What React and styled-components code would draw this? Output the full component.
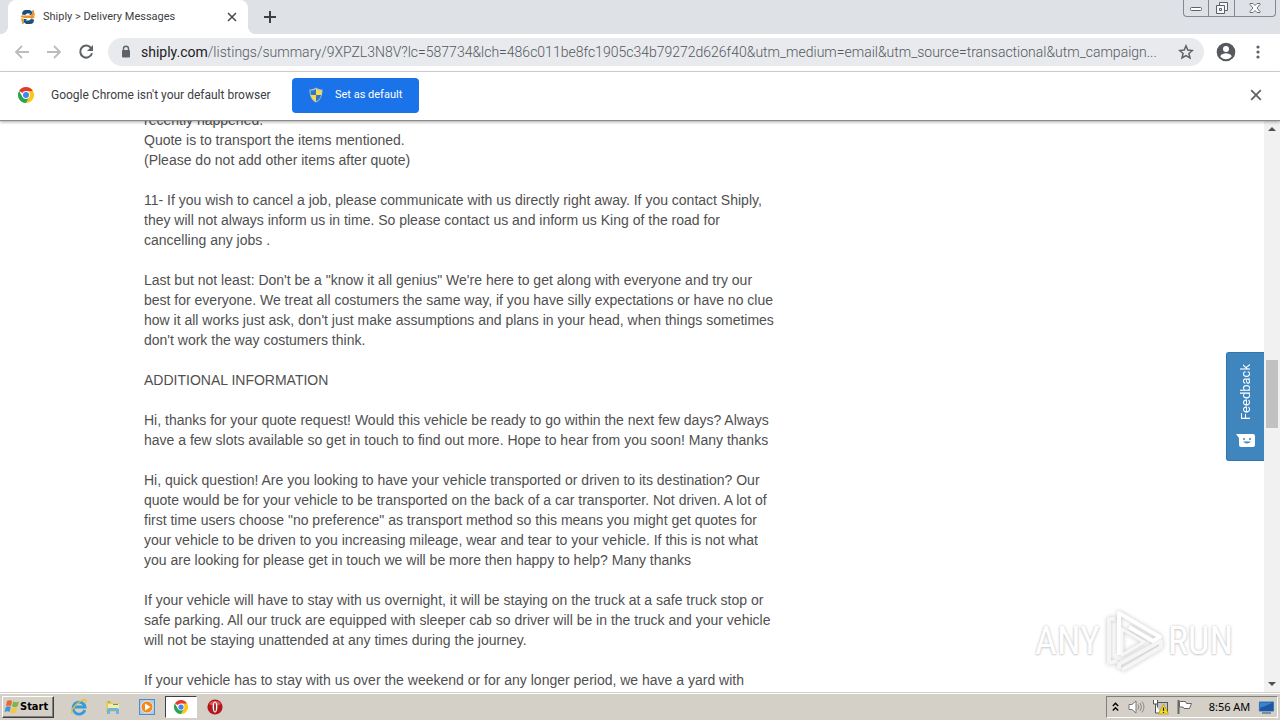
import React from "react";
import styled, { createGlobalStyle, css } from "styled-components";

const uiFont = `Roboto, "Noto Sans", sans-serif`;

const GlobalStyle = createGlobalStyle`
  * { box-sizing: border-box; }
  html, body, #root { height: 100%; }
  body { margin: 0; overflow: hidden; background: #fff; font-family: ${uiFont}; }
  button, input { font-family: inherit; margin: 0; padding: 0; border: 0; background: none; }
  svg { display: block; flex: none; }
`;

const Screen = styled.div`
  display: flex;
  flex-direction: column;
  height: 100vh;
`;

/* ---------- browser chrome ---------- */

const TabStrip = styled.header`
  display: flex;
  align-items: flex-start;
  height: 34px;
  flex: none;
  padding-left: 8px;
  background: #dee1e6;
`;

const Tab = styled.div`
  position: relative;
  display: flex;
  align-items: center;
  width: 240px;
  height: 34px;
  padding: 0 8px 0 12px;
  gap: 7px;
  border-radius: 8px 8px 0 0;
  background: #fff;
  &::before,
  &::after {
    content: "";
    position: absolute;
    bottom: 0;
    width: 8px;
    height: 8px;
  }
  &::before {
    right: 100%;
    background: radial-gradient(circle at 0 0, #dee1e6 8px, #fff 8px);
  }
  &::after {
    left: 100%;
    background: radial-gradient(circle at 100% 0, #dee1e6 8px, #fff 8px);
  }
`;

const TabTitle = styled.span`
  flex: 1;
  white-space: nowrap;
  font-size: 11px;
  line-height: 18px;
  color: #3c4043;
`;

const IconButton = styled.button`
  display: flex;
  align-items: center;
  justify-content: center;
  flex: none;
  width: ${(p) => p.$w || 16}px;
  height: ${(p) => p.$h || 16}px;
`;

const WindowButtons = styled.div`
  display: flex;
  margin-left: auto;
  margin-right: 4px;
  height: 17px;
  border: 1px solid #84898f;
  border-top: 0;
  border-radius: 0 0 4px 4px;
  button + button { border-left: 1px solid #84898f; }
`;

const Toolbar = styled.nav`
  display: flex;
  align-items: center;
  flex: none;
  height: 38px;
  padding: 0 12px 2px 6px;
  border-bottom: 1px solid #d5d7da;
  background: #fff;
`;

const Omnibox = styled.div`
  display: flex;
  align-items: center;
  flex: 1;
  min-width: 0;
  height: 28px;
  margin-left: 6px;
  padding: 0 10px 0 12px;
  border-radius: 14px;
  background: #e8eaed;
  font-size: 14px;
  line-height: 20px;
`;

const UrlHost = styled.label`
  margin-left: 9px;
  color: #202124;
`;

const UrlPath = styled.input`
  flex: 1;
  min-width: 0;
  height: 20px;
  margin-right: 8px;
  font-size: 14px;
  font-weight: 300;
  color: #55595e;
  text-overflow: ellipsis;
  outline: 0;
`;

const InfoBar = styled.section`
  position: relative;
  z-index: 1;
  display: flex;
  align-items: center;
  flex: none;
  height: 49px;
  padding: 0 16px 2px 18px;
  background: #fff;
  border-bottom: 1px solid #8b8b8b;
  box-shadow: 0 1px 3px rgba(0, 0, 0, 0.35);
`;

const InfoText = styled.span`
  width: 258px;
  padding-left: 17px;
  white-space: nowrap;
  font-size: 12px;
  line-height: 16px;
  color: #3c4043;
`;

const DefaultButton = styled.button`
  display: flex;
  align-items: center;
  gap: 11px;
  height: 35px;
  padding: 0 16px;
  width: 127px;
  border-radius: 4px;
  background: #1a73e8;
  color: #fff;
  font-size: 11px;
  line-height: 16px;
  white-space: nowrap;
`;

const CloseInfo = styled(IconButton)`
  margin-left: auto;
`;

/* ---------- page ---------- */

const Viewport = styled.div`
  position: relative;
  display: flex;
  flex: 1;
  min-height: 0;
  overflow: hidden;
`;

const Article = styled.main`
  flex: 1;
  min-width: 0;
  margin-top: -11px;
  padding-left: 144px;
  font-family: "Liberation Sans", Arial, sans-serif;
  font-size: 14px;
  line-height: 20px;
  color: #505050;
`;

const Paragraph = styled.p`
  margin: 0 0 20px;
  white-space: pre;
`;

const Scrollbar = styled.div`
  display: flex;
  flex-direction: column;
  align-items: center;
  width: 16px;
  flex: none;
  background: #f1f1f1;
`;

const ScrollSpace = styled.div`
  flex: ${(p) => p.$grow} 1 0;
`;

const ScrollThumb = styled.div`
  width: 12px;
  height: 68px;
  background: #c1c1c1;
`;

const FeedbackTab = styled.button`
  position: absolute;
  right: 16px;
  top: 231px;
  display: flex;
  flex-direction: column;
  align-items: center;
  justify-content: space-between;
  width: 38px;
  height: 109px;
  padding: 11px 0 12px;
  border: 1px solid #3475ab;
  border-right: 0;
  border-radius: 3px 0 0 3px;
  background: #3f85be;
  color: #fff;
`;

const FeedbackLabel = styled.span`
  writing-mode: vertical-rl;
  transform: rotate(180deg);
  font-size: 13px;
  line-height: 16px;
`;

const Watermark = styled.div`
  position: absolute;
  right: 47px;
  bottom: 19px;
  display: flex;
  align-items: center;
  gap: 4px;
  color: #fff;
  font-family: "Roboto Condensed", "Liberation Sans Narrow", Roboto, sans-serif;
  font-size: 38px;
  line-height: 40px;
  font-weight: 400;
  text-shadow: 0 0 3px #c8c8c8, 0 1px 2px #d4d4d4;
`;

/* ---------- task bar ---------- */

const TaskBar = styled.footer`
  display: flex;
  align-items: center;
  flex: none;
  height: 28px;
  padding: 0 2px;
  border-top: 1px solid #d4d0c8;
  box-shadow: inset 0 1px 0 #fff;
  background: #d4d0c8;
  color: #000;
`;

const raised = css`
  border: 1px solid;
  border-color: #fff #404040 #404040 #fff;
  box-shadow: inset -1px -1px 0 #808080;
`;

const StartButton = styled.button`
  ${raised}
  display: flex;
  align-items: center;
  gap: 0;
  width: 52px;
  height: 22px;
  padding-left: 1px;
  margin-right: 9px;
  background: #d4d0c8;
  font-family: "DejaVu Sans Condensed", "DejaVu Sans", sans-serif;
  font-weight: 700;
  font-size: 11px;
  line-height: 16px;
`;

const TaskButton = styled.button`
  display: flex;
  align-items: center;
  justify-content: center;
  width: 32px;
  height: 22px;
  margin-right: 2px;
  border: 1px solid;
  border-color: ${(p) => (p.$active ? "#404040 #fff #fff #404040" : "transparent")};
  background: ${(p) => (p.$active ? "#fff" : "none")};
`;

const Tray = styled.div`
  display: flex;
  align-items: center;
  margin-left: auto;
  height: 22px;
  padding: 0 2px 0 4px;
  border: 1px solid;
  border-color: #808080 #fff #fff #808080;
`;

const TrayButton = styled(IconButton)`
  width: ${(p) => p.$w}px;
  height: 20px;
`;

const Clock = styled.time`
  width: 57px;
  padding-left: 2px;
  text-align: center;
  white-space: nowrap;
  font-family: "Noto Sans", sans-serif;
  font-size: 11px;
  line-height: 16px;
`;

/* ---------- drawings ---------- */

const ShiplyIcon = () => (
  <svg width="16" height="16" viewBox="0 0 16 16">
    <path d="M2 5.500Q2 1 6 1h4l1.500 1.500L13.500 1v5H9l1.500-1.500H7L5 6z" fill="#1d4f78" />
    <path d="M14 10.500Q14 15 10 15H6l-1.500-1.500L2.500 15v-5H7l-1.500 1.500H9L11 10z" fill="#1d4f78" />
    <path d="M1 6.500h10V4.500L15 8l-4 2.500V9H4L1 8z" fill="#e8952c" />
    <path d="M12 1.500Q15.500 3 14.500 7L12 6zM4 14.500Q.5 13 1.500 9L4 10z" fill="#e8952c" />
  </svg>
);

const Cross = ({ size, color }) => (
  <svg width={size} height={size} viewBox="0 0 10 10">
    <path d="M1 1l8 8M9 1l-8 8" stroke={color} strokeWidth="1.5" />
  </svg>
);

const ArrowIcon = ({ flip }) => (
  <svg width="16" height="16" viewBox="0 0 16 16" transform={flip ? "scale(-1 1)" : undefined}>
    <path d="M15 8H2M8 2L2 8l6 6" fill="none" stroke="#babcbe" strokeWidth="1.8" />
  </svg>
);

const ReloadIcon = () => (
  <svg width="16" height="16" viewBox="0 0 16 16">
    <path d="M13.2 4.2A6 6 0 1 0 14 9.3" fill="none" stroke="#5f6368" strokeWidth="2" />
    <path d="M15 1v6H9z" fill="#5f6368" />
  </svg>
);

const LockIcon = () => (
  <svg width="12" height="14" viewBox="0 0 12 14">
    <path d="M3.5 6V3.8a2.5 2.5 0 0 1 5 0V6" fill="none" stroke="#5f6368" strokeWidth="1.4" />
    <rect x="2" y="5" width="8" height="7.5" rx="1" fill="#5f6368" />
  </svg>
);

const StarIcon = () => (
  <svg width="16" height="16" viewBox="0 0 16 16">
    <path d="M8 1.8l1.8 4.3 4.6.4-3.5 3 1.1 4.5L8 11.6 4 14l1.1-4.5-3.5-3 4.6-.4z" fill="none" stroke="#5f6368" strokeWidth="1.5" />
  </svg>
);

const ProfileIcon = () => (
  <svg width="20" height="20" viewBox="0 0 20 20">
    <circle cx="10" cy="10" r="9.3" fill="#55585c" />
    <circle cx="10" cy="7" r="3" fill="#fff" />
    <path d="M4.2 14.2c1-2.2 4-2.9 5.8-2.9s4.8.7 5.8 2.9c-1.3 1.9-3.5 3-5.8 3s-4.5-1.1-5.8-3z" fill="#fff" />
  </svg>
);

const DotsIcon = () => (
  <svg width="4" height="14" viewBox="0 0 4 14" fill="#5f6368">
    <circle cx="2" cy="2" r="1.6" />
    <circle cx="2" cy="7" r="1.6" />
    <circle cx="2" cy="12" r="1.6" />
  </svg>
);

const ChromeIcon = ({ size }) => (
  <svg width={size} height={size} viewBox="0 0 16 16">
    <path d="M8 8L1.07 4A8 8 0 0 1 14.93 4z" fill="#e23b2e" />
    <path d="M8 8V4h6.93A8 8 0 0 1 8 16l3.46-6z" fill="#fbc713" />
    <path d="M8 8l3.46 2L8 16A8 8 0 0 1 1.07 4L4.54 10z" fill="#2ba24c" />
    <circle cx="8" cy="8" r="3.9" fill="#fff" />
    <circle cx="8" cy="8" r="3" fill="#4285f4" />
  </svg>
);

const ShieldIcon = () => (
  <svg width="16" height="16" viewBox="0 0 16 16">
    <path d="M8 .5C10 2 12 2.5 14.5 2.5c0 6-1.5 10.500-6.500 13-5-2.500-6.500-7-6.500-13C4 2.5 6 2 8 .5z" fill="#b9c4c9" />
    <path d="M8 2v6H2.900C2.600 6.500 2.500 5 2.500 3.500 4.500 3.500 6.500 3 8 2z" fill="#2f78c4" />
    <path d="M8 2c1.500 1 3.500 1.500 5.500 1.500 0 1.500-.1 3-.4 4.500H8z" fill="#f9d84a" />
    <path d="M8 8v6.500C5 13 3.500 10.800 2.900 8z" fill="#f9d84a" />
    <path d="M8 8h5.100C12.500 10.800 11 13 8 14.500z" fill="#2f78c4" />
  </svg>
);

const SmileIcon = () => (
  <svg width="20" height="16" viewBox="0 0 20 16">
    <path d="M0 2h17a2 2 0 0 1 2 2v9a2 2 0 0 1-2 2H5a2 2 0 0 1-2-2V6z" fill="#fff" />
    <circle cx="8" cy="7" r="1" fill="#3f85be" />
    <circle cx="14" cy="7" r="1" fill="#3f85be" />
    <path d="M7 9.500q4 4 8 0z" fill="#3f85be" />
  </svg>
);

const LogoDrawing = styled.svg`
  filter: drop-shadow(0 0 2px #c4c4c4);
`;

const PlayLogo = () => (
  <LogoDrawing width="60" height="64" viewBox="0 0 60 64">
    <g fill="none" stroke="#fff" strokeWidth="4" strokeLinejoin="round">
      <path d="M15 46V4l41 24-7 4-24-14" />
      <path d="M11 10H5v44l8-2M18 61l39-23v-6L15 55v5" stroke="#f5f5f5" />
      <path d="M18 20v26l22-13z" stroke="#f7f7f7" strokeWidth="3" />
    </g>
  </LogoDrawing>
);

const WindowsFlag = () => (
  <svg width="16" height="16" viewBox="0 0 16 16">
    <path d="M3 2q2.500-1.500 5 0L7 7Q4.500 5.800 2 7z" fill="#e9672b" />
    <path d="M9 2.500q3 1.500 6 0l-1.500 5q-2.500 1.300-5.500 0z" fill="#7db547" />
    <path d="M1.800 8q2.500-1.300 5 0l-1.300 5q-2-1.300-5 0z" fill="#4595d1" />
    <path d="M7.800 8.500q2.500 1.300 5.500 0l-1.500 5q-2.800 1.300-5.300 0z" fill="#f6c63c" />
  </svg>
);

const IeIcon = () => (
  <svg width="18" height="18" viewBox="0 0 18 18">
    <path d="M14.800 12A6 6 0 1 1 15 9H5" fill="none" stroke="#369cd8" strokeWidth="2.8" />
    <path d="M3 15.500C-1 15 4 7 10 3.500s7-2 5.500 1.500" fill="none" stroke="#e8bf3d" strokeWidth="1.3" />
  </svg>
);

const FolderIcon = () => (
  <svg width="18" height="18" viewBox="0 0 18 18">
    <path d="M2 3h5l1 2h7v9H2z" fill="#e7c766" />
    <path d="M4 6h11v5H4z" fill="#f8eaa8" />
    <path d="M3 16v-4q0-2 2-2h8q2 0 2 2v4h-3v-3H6v3z" fill="#6db5e0" />
    <path d="M4 4h2M9 6.500h5" stroke="#5aa05a" />
  </svg>
);

const MediaIcon = () => (
  <svg width="18" height="18" viewBox="0 0 18 18">
    <rect x="1.500" y="1.500" width="15" height="15" fill="#a6cdec" stroke="#4d8cc4" />
    <circle cx="9" cy="9" r="6" fill="#f28a1c" stroke="#fff" strokeWidth=".7" />
    <path d="M7 5.500v7L12.500 9z" fill="#fff" />
  </svg>
);

const OperaIcon = () => (
  <svg width="16" height="16" viewBox="0 0 16 16">
    <circle cx="8" cy="8" r="7.600" fill="#b3161b" />
    <path d="M2 5a7 6 0 0 1 12 0q-6 4-12 0z" fill="#dc5a56" />
    <ellipse cx="8" cy="8" rx="2.400" ry="5.600" fill="#fff" />
    <ellipse cx="8" cy="8" rx=".9" ry="4.600" fill="#8f1216" />
  </svg>
);

const ChevronsUp = () => (
  <svg width="7" height="10" viewBox="0 0 7 10">
    <path d="M.8 4L3.500 1.300 6.200 4M.8 8.500l2.700-2.700 2.700 2.700" fill="none" stroke="#000" strokeWidth="1.4" />
  </svg>
);

const SpeakerIcon = () => (
  <svg width="17" height="16" viewBox="0 0 17 16">
    <path d="M1 5.500h3L8 2v12l-4-3.500H1z" fill="#fff" stroke="#777" />
    <path d="M10 5.500q1.600 2.500 0 5M12 4q3 4 0 8M14 2.500q4 5.500 0 11" fill="none" stroke="#8a8a8a" />
  </svg>
);

const NetworkIcon = () => (
  <svg width="17" height="16" viewBox="0 0 17 16">
    <rect x="5.500" y="3.500" width="10" height="9" fill="#c4c4c4" stroke="#555" />
    <path d="M1.500 1v4h4V1M3.500 5v9h5" fill="#fff" stroke="#555" />
    <path d="M11.500 5l5 10h-10z" fill="#f7dc23" stroke="#b69c12" strokeWidth=".7" />
    <path d="M11.500 8.500v3.500M11.500 13v1" stroke="#222" strokeWidth="1.2" />
  </svg>
);

const FlagIcon = () => (
  <svg width="17" height="16" viewBox="0 0 17 16">
    <path d="M2.500 1v14" stroke="#666" strokeWidth="2" />
    <path d="M3.500 2.500h6l1 2h5l-2 5H8l-1-1.500H3.500z" fill="#fff" stroke="#666" />
  </svg>
);

const DesktopIcon = () => (
  <svg width="16" height="16" viewBox="0 0 16 16">
    <rect x="1" y="2.500" width="15" height="10" rx="1" fill="#1c58a6" stroke="#92aecb" strokeWidth=".6" />
    <path d="M2 3.500h13L2 9z" fill="#3c83cd" />
    <path d="M4 14h9" stroke="#26486f" />
  </svg>
);

const Triangle = ({ down }) => (
  <svg width="16" height="16" viewBox="0 0 16 16">
    <path d={down ? "M4 6h8l-4 4z" : "M4 10h8L8 6z"} fill="#505050" />
  </svg>
);

const MinimizeGlyph = () => (
  <svg width="14" height="8" viewBox="0 0 14 8">
    <rect x="1.500" y="3.500" width="11" height="3" rx="1" fill="#fff" stroke="#5d6268" />
  </svg>
);

const RestoreGlyph = () => (
  <svg width="14" height="14" viewBox="0 0 14 14" fill="#f6f7f8" stroke="#5d6268">
    <path d="M4.500 1.500h8v8h-8z" />
    <path d="M1.500 4.500h8v8h-8z" />
    <path d="M4.500 7.500h2v2h-2z" />
  </svg>
);

const CloseGlyph = () => (
  <svg width="12" height="12" viewBox="0 0 12 12">
    <path d="M1 1.500h3l2 2 2-2h3v1L8 6l3 3.500v1H8l-2-2-2 2H1v-1L4 6 1 2.500z" fill="#fff" stroke="#5d6268" strokeWidth=".9" />
  </svg>
);

const paragraphs = [
  `recently happened.
Quote is to transport the items mentioned.
(Please do not add other items after quote)`,
  `11- If you wish to cancel a job, please communicate with us directly right away. If you contact Shiply,
they will not always inform us in time. So please contact us and inform us King of the road for
cancelling any jobs .`,
  `Last but not least: Don't be a "know it all genius" We're here to get along with everyone and try our
best for everyone. We treat all costumers the same way, if you have silly expectations or have no clue
how it all works just ask, don't just make assumptions and plans in your head, when things sometimes
don't work the way costumers think.`,
  `ADDITIONAL INFORMATION`,
  `Hi, thanks for your quote request! Would this vehicle be ready to go within the next few days? Always
have a few slots available so get in touch to find out more. Hope to hear from you soon! Many thanks`,
  `Hi, quick question! Are you looking to have your vehicle transported or driven to its destination? Our
quote would be for your vehicle to be transported on the back of a car transporter. Not driven. A lot of
first time users choose "no preference" as transport method so this means you might get quotes for
your vehicle to be driven to you increasing mileage, wear and tear to your vehicle. If this is not what
you are looking for please get in touch we will be more then happy to help? Many thanks`,
  `If your vehicle will have to stay with us overnight, it will be staying on the truck at a safe truck stop or
safe parking. All our truck are equipped with sleeper cab so driver will be in the truck and your vehicle
will not be staying unattended at any times during the journey.`,
  `If your vehicle has to stay with us over the weekend or for any longer period, we have a yard with`,
];

export default function App() {
  return (
    <Screen>
      <GlobalStyle />
      <TabStrip>
        <Tab>
          <ShiplyIcon />
          <TabTitle>Shiply &gt; Delivery Messages</TabTitle>
          <IconButton aria-label="Close tab"><Cross size={10} color="#45494d" /></IconButton>
        </Tab>
        <IconButton $w={44} $h={34} aria-label="New tab">
          <svg width="12" height="12" viewBox="0 0 12 12"><path d="M6 0v12M0 6h12" stroke="#3c4043" strokeWidth="2" /></svg>
        </IconButton>
        <WindowButtons>
          <IconButton $w={24} aria-label="Minimize"><MinimizeGlyph /></IconButton>
          <IconButton $w={26} aria-label="Restore"><RestoreGlyph /></IconButton>
          <IconButton $w={41} aria-label="Close"><CloseGlyph /></IconButton>
        </WindowButtons>
      </TabStrip>
      <Toolbar>
        <IconButton $w={32} $h={28} aria-label="Back"><ArrowIcon /></IconButton>
        <IconButton $w={32} $h={28} aria-label="Forward"><ArrowIcon flip /></IconButton>
        <IconButton $w={32} $h={28} aria-label="Reload"><ReloadIcon /></IconButton>
        <Omnibox>
          <LockIcon />
          <UrlHost htmlFor="address">shiply.com</UrlHost>
          <UrlPath
            id="address"
            readOnly
            value="/listings/summary/9XPZL3N8V?lc=587734&lch=486c011be8fc1905c34b79272d626f40&utm_medium=email&utm_source=transactional&utm_campaign..."
          />
          <IconButton aria-label="Bookmark"><StarIcon /></IconButton>
        </Omnibox>
        <IconButton $w={44} $h={28} aria-label="Profile"><ProfileIcon /></IconButton>
        <IconButton $w={20} $h={28} aria-label="Menu"><DotsIcon /></IconButton>
      </Toolbar>
      <InfoBar>
        <ChromeIcon size={16} />
        <InfoText>Google Chrome isn't your default browser</InfoText>
        <DefaultButton><ShieldIcon />Set as default</DefaultButton>
        <CloseInfo aria-label="Dismiss"><Cross size={12} color="#5f6368" /></CloseInfo>
      </InfoBar>
      <Viewport>
        <Article>
          {paragraphs.map((text) => <Paragraph key={text}>{text}</Paragraph>)}
        </Article>
        <Scrollbar>
          <Triangle />
          <ScrollSpace $grow={223} />
          <ScrollThumb />
          <ScrollSpace $grow={248} />
          <Triangle down />
        </Scrollbar>
        <FeedbackTab>
          <FeedbackLabel>Feedback</FeedbackLabel>
          <SmileIcon />
        </FeedbackTab>
        <Watermark>
          <span>ANY</span>
          <PlayLogo />
          <span>RUN</span>
        </Watermark>
      </Viewport>
      <TaskBar>
        <StartButton><WindowsFlag />Start</StartButton>
        <TaskButton aria-label="Internet Explorer"><IeIcon /></TaskButton>
        <TaskButton aria-label="Explorer"><FolderIcon /></TaskButton>
        <TaskButton aria-label="Media Player"><MediaIcon /></TaskButton>
        <TaskButton $active aria-label="Chrome"><ChromeIcon size={14} /></TaskButton>
        <TaskButton aria-label="Opera"><OperaIcon /></TaskButton>
        <Tray>
          <TrayButton $w={9} aria-label="Show hidden icons"><ChevronsUp /></TrayButton>
          <TrayButton $w={32} aria-label="Volume"><SpeakerIcon /></TrayButton>
          <TrayButton $w={17} aria-label="Network"><NetworkIcon /></TrayButton>
          <TrayButton $w={31} aria-label="Action Center"><FlagIcon /></TrayButton>
          <Clock>8:56 AM</Clock>
          <TrayButton $w={18} aria-label="Show desktop"><DesktopIcon /></TrayButton>
        </Tray>
      </TaskBar>
    </Screen>
  );
}
